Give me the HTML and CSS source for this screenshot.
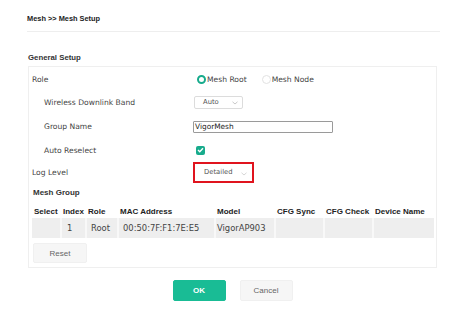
FILE: index.html
```html
<!DOCTYPE html>
<html lang="en">
<head>
    <meta charset="UTF-8">
    <title>Mesh Setup</title>
    <link rel="stylesheet" href="styles.css">
</head>
<body>
    <div class="page">
        <div class="crumb">Mesh &gt;&gt; Mesh Setup</div>

        <div class="section-title">General Setup</div>
        <div class="panel">
            <div class="row">
                <div class="label">Role</div>
                <div class="field">
                    <label class="radio"><span class="dot on"></span>Mesh Root</label>
                    <label class="radio"><span class="dot"></span>Mesh Node</label>
                </div>
            </div>
            <div class="row">
                <div class="label sub">Wireless Downlink Band</div>
                <div class="field">
                    <div class="select small">Auto
                        <svg class="chev" width="6" height="4" viewBox="0 0 6 4"><polyline points="0.5,0.8 3,3 5.5,0.8" fill="none" stroke="#bbb" stroke-width="0.8"/></svg>
                    </div>
                </div>
            </div>
            <div class="row tall">
                <div class="label sub">Group Name</div>
                <div class="field">
                    <div class="text-input">VigorMesh</div>
                </div>
            </div>
            <div class="row short">
                <div class="label sub">Auto Reselect</div>
                <div class="field">
                    <span class="checkbox">
                        <svg width="7" height="6" viewBox="0 0 7 6"><polyline points="1,3 2.8,4.8 6,1.2" fill="none" stroke="#fff" stroke-width="1.4"/></svg>
                    </span>
                </div>
            </div>
            <div class="row">
                <div class="label">Log Level</div>
                <div class="field">
                    <div class="highlight">
                        <div class="select wide">Detailed
                            <svg class="chev" width="6" height="4" viewBox="0 0 6 4"><polyline points="0.5,0.8 3,3 5.5,0.8" fill="none" stroke="#ccc" stroke-width="0.8"/></svg>
                        </div>
                    </div>
                </div>
            </div>

            <div class="group-title">Mesh Group</div>
            <table class="grid">
                <thead>
                    <tr>
                        <th class="c-select">Select</th>
                        <th class="c-index">Index</th>
                        <th class="c-role">Role</th>
                        <th class="c-mac">MAC Address</th>
                        <th class="c-model">Model</th>
                        <th class="c-sync">CFG Sync</th>
                        <th class="c-check">CFG Check</th>
                        <th class="c-name">Device Name</th>
                    </tr>
                </thead>
                <tbody>
                    <tr>
                        <td></td>
                        <td class="num">1</td>
                        <td>Root</td>
                        <td>00:50:7F:F1:7E:E5</td>
                        <td class="model">VigorAP903</td>
                        <td></td>
                        <td></td>
                        <td></td>
                    </tr>
                </tbody>
            </table>
            <button class="btn reset">Reset</button>
        </div>

        <div class="actions">
            <button class="btn ok">OK</button>
            <button class="btn cancel">Cancel</button>
        </div>
    </div>
</body>
</html>
```

FILE: styles.css
```css
* {
    margin: 0;
    padding: 0;
    box-sizing: border-box;
}

body {
    background-color: #fff;
    font-family: 'DejaVu Sans', Verdana, sans-serif;
    color: #444;
}

.page {
    width: 440px;
    padding-left: 27px;
}

.crumb {
    height: 32px;
    padding-top: 13px;
    line-height: 11px;
    font-family: 'Liberation Sans', Arial, sans-serif;
    font-weight: bold;
    font-size: 7.4px;
    color: #222;
    border-bottom: 1px solid #eeeeee;
}

.section-title {
    padding: 20px 0 2px 1px;
    line-height: 12px;
    font-family: 'Liberation Sans', Arial, sans-serif;
    font-weight: bold;
    font-size: 7.8px;
    color: #333;
}

.panel {
    width: 409px;
    margin-left: 1px;
    padding: 1px 3px 4px 3px;
    border: 1px solid #efefef;
}

.row {
    display: flex;
    align-items: center;
    height: 23px;
}

.row.tall {
    height: 25px;
}

.row.short {
    height: 22px;
}

.label {
    width: 161px;
    font-size: 7.6px;
    color: #444;
}

.label.sub {
    padding-left: 12px;
}

.field {
    display: flex;
    align-items: center;
}

.radio {
    display: flex;
    align-items: center;
    font-size: 7.6px;
    color: #444;
    margin-left: 4px;
    margin-right: 11px;
}

.dot {
    width: 9px;
    height: 9px;
    border-radius: 50%;
    border: 1px solid #e2e2e2;
    margin-right: 1px;
}

.dot.on {
    border: 2.5px solid #17ab8c;
}

.select {
    position: relative;
    height: 13px;
    line-height: 11px;
    border: 1px solid #dcdcdc;
    border-radius: 2px;
    font-size: 6.8px;
    color: #555;
    background-color: #fff;
}

.select.small {
    width: 49px;
    margin-left: 1px;
    padding-left: 8px;
}

.select.wide {
    width: 57px;
    height: 17px;
    line-height: 15px;
    border-color: #fff;
    padding-left: 8px;
}

.chev {
    position: absolute;
    right: 4px;
    top: 4px;
}

.select.wide .chev {
    top: 7px;
}

.text-input {
    width: 140px;
    height: 12px;
    line-height: 10px;
    border: 1px solid #9a9a9a;
    border-radius: 1px;
    padding-left: 1px;
    font-size: 7.4px;
    color: #222;
}

.checkbox {
    display: flex;
    align-items: center;
    justify-content: center;
    width: 9px;
    height: 9px;
    margin-left: 3px;
    border-radius: 2px;
    background-color: #17ab8c;
}

.highlight {
    width: 61px;
    height: 21px;
    border: 2px solid #e0141e;
}

.group-title {
    height: 18px;
    line-height: 18px;
    padding-left: 1px;
    font-family: 'Liberation Sans', Arial, sans-serif;
    font-weight: bold;
    font-size: 8px;
    color: #333;
}

.grid {
    width: 402px;
    margin-top: 2px;
    border-collapse: collapse;
    table-layout: fixed;
}

.grid th {
    height: 14px;
    padding-left: 2px;
    text-align: left;
    font-family: 'Liberation Sans', Arial, sans-serif;
    font-weight: bold;
    font-size: 8px;
    color: #222;
    white-space: nowrap;
}

.grid td {
    height: 20px;
    padding-left: 4px;
    background-color: #eeeeee;
    border-left: 2px solid #f8f8f8;
    font-size: 8.4px;
    color: #444;
    white-space: nowrap;
}

.grid td:first-child {
    border-left: none;
}

.grid td.num {
    padding-left: 5px;
}

.grid td.model {
    padding-left: 1px;
}

.c-select { width: 29px; }
.c-index { width: 25px; }
.c-role { width: 32px; }
.c-mac { width: 97px; }
.c-model { width: 60px; }
.c-sync { width: 49px; }
.c-check { width: 49px; }
.c-name { width: 61px; }

.btn {
    height: 21px;
    border: 1px solid #f0f0f0;
    border-radius: 2px;
    background-color: #f6f6f6;
    font-family: 'Liberation Sans', Arial, sans-serif;
    font-size: 8px;
    color: #666;
}

.reset {
    display: block;
    width: 54px;
    height: 20px;
    margin: 5px 0 0 1px;
}

.actions {
    width: 409px;
    margin: 12px 0 0 1px;
    display: flex;
    justify-content: center;
    gap: 14px;
}

.ok {
    width: 53px;
    border-color: #19bc95;
    background-color: #19bc95;
    color: #fff;
    font-weight: bold;
}

.cancel {
    width: 53px;
}
```
